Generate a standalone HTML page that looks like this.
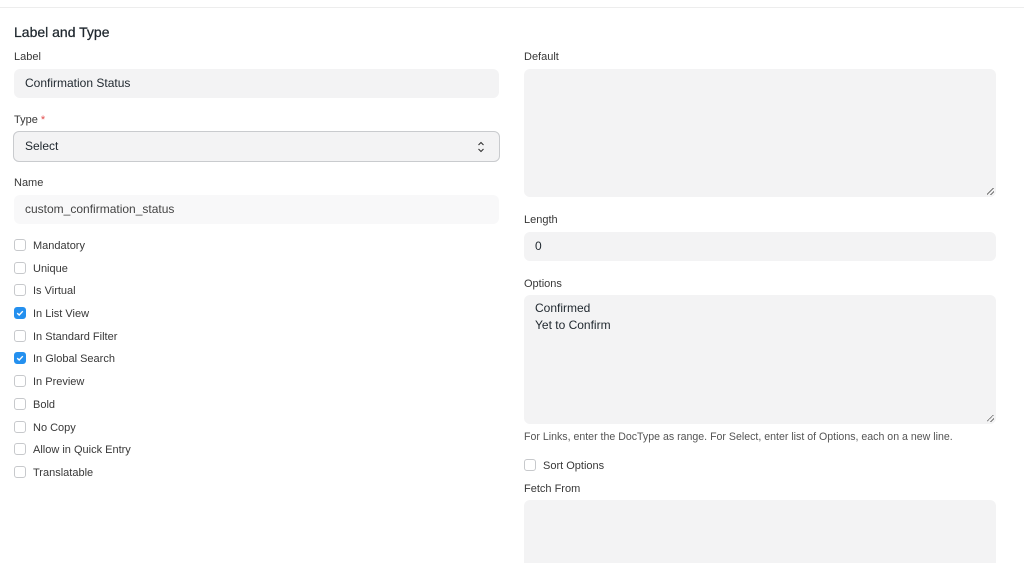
<!DOCTYPE html>
<html><head><style>
html,body{margin:0;width:1024px;height:563px;overflow:hidden}
body{background:#fff;font-family:"Liberation Sans",sans-serif;color:#1f272e;position:relative}
.a{position:absolute}
.lbl{position:absolute;font-size:11px;color:#383838;line-height:14px}
.in{position:absolute;background:#f3f3f4;border-radius:6px;font-size:12px;color:#1f272e;box-sizing:border-box;padding-left:11px}
.cb{position:absolute;left:14px;width:12px;height:12px;border:1px solid #c7c9cc;border-radius:3px;box-sizing:border-box;background:#fff}
.cb.on{background:#2490ef;border-color:#2490ef}
.ct{position:absolute;left:33px;font-size:11px;color:#383838;line-height:14px}
.grip{position:absolute;width:7px;height:7px;background:linear-gradient(135deg,transparent 40%,#777 40%,#777 50%,transparent 50%,transparent 70%,#777 70%,#777 80%,transparent 80%)}
</style></head><body>
<div class="a" style="left:0;top:7px;width:1024px;height:1px;background:#ededed"></div>
<div class="a" style="left:14px;top:23px;font-size:14px;color:#1f272e;line-height:18px;-webkit-text-stroke:0.25px #1f272e">Label and Type</div>

<div class="lbl" style="left:14px;top:50px">Label</div>
<div class="in" style="left:14px;top:69px;width:485px;height:29px;line-height:29px">Confirmation Status</div>
<div class="lbl" style="left:14px;top:113px">Type <span style="color:#e24c4c">*</span></div>
<div class="in" style="left:13px;top:131px;width:487px;height:31px;line-height:29px;border:1px solid #c9cbce">Select
<svg class="a" style="left:463px;top:9px" width="8" height="12" viewBox="0 0 8 12"><path d="M1.5 4 L4 1.5 L6.5 4 M1.5 8 L4 10.5 L6.5 8" fill="none" stroke="#333" stroke-width="1.1"/></svg></div>
<div class="lbl" style="left:14px;top:176px">Name</div>
<div class="in" style="left:14px;top:195px;width:485px;height:29px;line-height:29px;background:#f8f8f9;color:#444">custom_confirmation_status</div>

<div class="cb" style="top:239px"></div><div class="ct" style="top:239px">Mandatory</div>
<div class="cb" style="top:262px"></div><div class="ct" style="top:262px">Unique</div>
<div class="cb" style="top:284px"></div><div class="ct" style="top:284px">Is Virtual</div>
<div class="cb on" style="top:307px"><svg width="12" height="12" style="position:absolute;left:-1px;top:-1px"><path d="M3.2 6.2 L5.2 8 L8.8 4.2" fill="none" stroke="#fff" stroke-width="1.4"/></svg></div><div class="ct" style="top:307px">In List View</div>
<div class="cb" style="top:330px"></div><div class="ct" style="top:330px">In Standard Filter</div>
<div class="cb on" style="top:352px"><svg width="12" height="12" style="position:absolute;left:-1px;top:-1px"><path d="M3.2 6.2 L5.2 8 L8.8 4.2" fill="none" stroke="#fff" stroke-width="1.4"/></svg></div><div class="ct" style="top:352px">In Global Search</div>
<div class="cb" style="top:375px"></div><div class="ct" style="top:375px">In Preview</div>
<div class="cb" style="top:398px"></div><div class="ct" style="top:398px">Bold</div>
<div class="cb" style="top:421px"></div><div class="ct" style="top:421px">No Copy</div>
<div class="cb" style="top:443px"></div><div class="ct" style="top:443px">Allow in Quick Entry</div>
<div class="cb" style="top:466px"></div><div class="ct" style="top:466px">Translatable</div>

<div class="lbl" style="left:524px;top:50px">Default</div>
<div class="in" style="left:524px;top:69px;width:472px;height:128px"><div class="grip" style="right:2px;bottom:2px"></div></div>
<div class="lbl" style="left:524px;top:213px">Length</div>
<div class="in" style="left:524px;top:232px;width:472px;height:29px;line-height:29px">0</div>
<div class="lbl" style="left:524px;top:277px">Options</div>
<div class="in" style="left:524px;top:295px;width:472px;height:129px;padding-top:5px;line-height:16.5px">Confirmed<br>Yet to Confirm<div class="grip" style="right:2px;bottom:2px"></div></div>
<div class="lbl" style="left:524px;top:430px;font-size:10.6px;color:#555">For Links, enter the DocType as range. For Select, enter list of Options, each on a new line.</div>
<div class="cb" style="left:524px;top:459px"></div><div class="ct" style="left:543px;top:459px">Sort Options</div>
<div class="lbl" style="left:524px;top:482px">Fetch From</div>
<div class="in" style="left:524px;top:500px;width:472px;height:80px"></div>
</body></html>
